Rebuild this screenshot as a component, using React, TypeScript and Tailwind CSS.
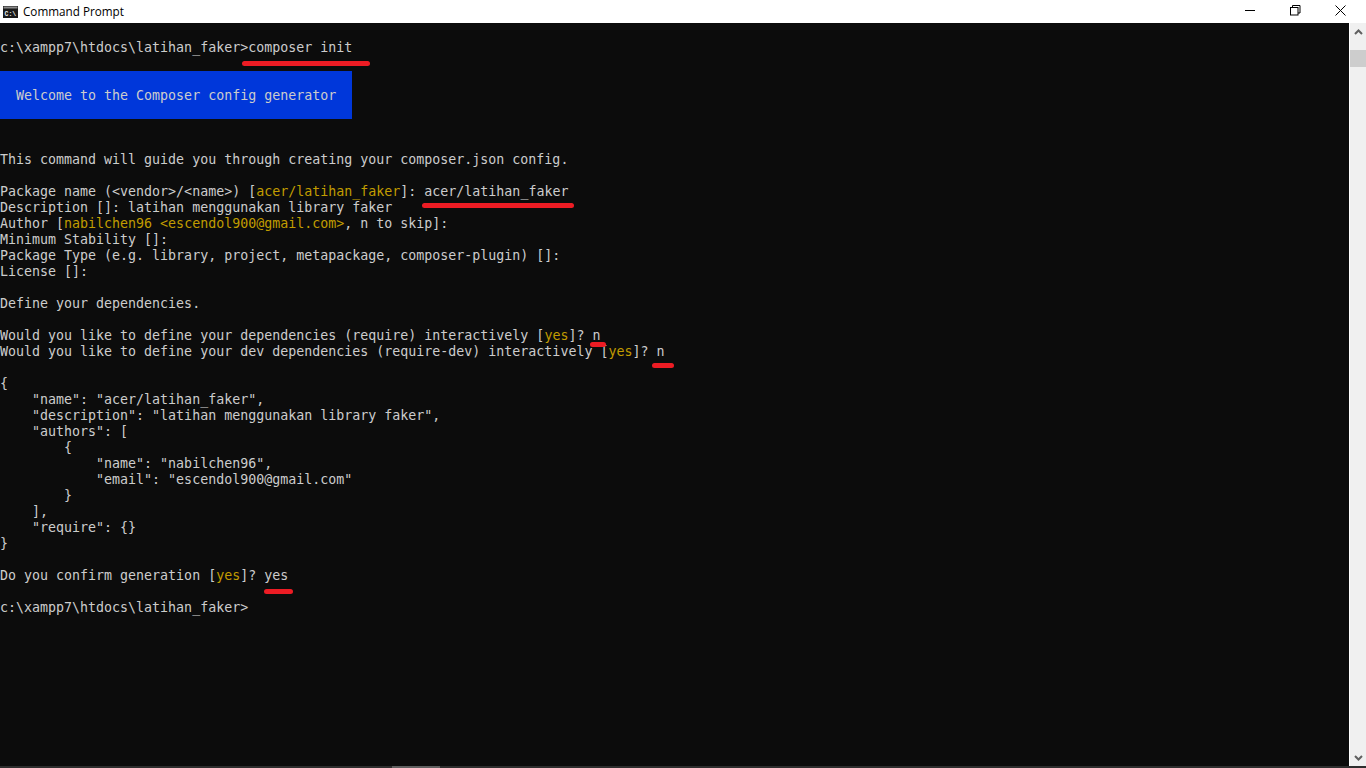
const Y = ({ children }: { children: string }) => <span className="text-[#c19c00]">{children}</span>;

const rows = [
  <>&nbsp;</>,
  <>c:\xampp7\htdocs\latihan_faker&gt;composer init</>,
  <>&nbsp;</>,
  <div className="h-full w-[352px] bg-[#0037da]">&nbsp;</div>,
  <div className="h-full w-[352px] bg-[#0037da]">  Welcome to the Composer config generator</div>,
  <div className="h-full w-[352px] bg-[#0037da]">&nbsp;</div>,
  <>&nbsp;</>,
  <>&nbsp;</>,
  <>This command will guide you through creating your composer.json config.</>,
  <>&nbsp;</>,
  <>Package name (&lt;vendor&gt;/&lt;name&gt;) [<Y>acer/latihan_faker</Y>]: acer/latihan_faker</>,
  <>Description []: latihan menggunakan library faker</>,
  <>Author [<Y>nabilchen96 &lt;escendol900@gmail.com&gt;</Y>, n to skip]:</>,
  <>Minimum Stability []:</>,
  <>Package Type (e.g. library, project, metapackage, composer-plugin) []:</>,
  <>License []:</>,
  <>&nbsp;</>,
  <>Define your dependencies.</>,
  <>&nbsp;</>,
  <>Would you like to define your dependencies (require) interactively [<Y>yes</Y>]? n</>,
  <>Would you like to define your dev dependencies (require-dev) interactively [<Y>yes</Y>]? n</>,
  <>&nbsp;</>,
  <>{'{'}</>,
  <>    "name": "acer/latihan_faker",</>,
  <>    "description": "latihan menggunakan library faker",</>,
  <>    "authors": [</>,
  <>        {'{'}</>,
  <>            "name": "nabilchen96",</>,
  <>            "email": "escendol900@gmail.com"</>,
  <>        {'}'}</>,
  <>    ],</>,
  <>    "require": {'{}'}</>,
  <>{'}'}</>,
  <>&nbsp;</>,
  <>Do you confirm generation [<Y>yes</Y>]? yes</>,
  <>&nbsp;</>,
  <>c:\xampp7\htdocs\latihan_faker&gt;</>,
];

function TitleBar() {
  return (
    <div className="flex h-[23px] shrink-0 items-center bg-white text-black">
      <svg width="15" height="12" viewBox="0 0 15 12" className="ml-[3px]">
        <rect width="15" height="12" fill="#1a1a1a" />
        <rect x="0.5" y="0.5" width="14" height="2" fill="#8a8a8a" />
        <text x="1.5" y="9.5" fontSize="6.5" fontWeight="700" fill="#e8e8e8" fontFamily="'Liberation Mono', monospace">C:\</text>
      </svg>
      <span className="ml-[5px] font-['Open_Sans',sans-serif] text-[11.7px] leading-none">Command Prompt</span>
      <div className="mr-[20px] mb-[2px] ml-auto flex items-center gap-[34px]">
        <svg width="11" height="11" viewBox="0 0 11 11">
          <path d="M0 5.5h10" stroke="#000" strokeWidth="1" />
        </svg>
        <svg width="11" height="11" viewBox="0 0 11 11">
          <path d="M2.5 2.5V.5h7.5v7.5h-2" fill="none" stroke="#000" />
          <rect x="0.5" y="2.5" width="7.5" height="7.5" fill="none" stroke="#000" />
        </svg>
        <svg width="11" height="11" viewBox="0 0 11 11">
          <path d="M.5.5l10 10M10.5.5l-10 10" stroke="#000" strokeWidth="1" />
        </svg>
      </div>
    </div>
  );
}

function Scrollbar() {
  return (
    <div className="flex w-[17px] shrink-0 flex-col border-l border-white bg-[#f0f0f0]">
      <div className="flex h-[17px] items-center justify-center">
        <svg width="9" height="6" viewBox="0 0 9 6">
          <path d="M1 5l3.5-3.5L8 5" fill="none" stroke="#606060" strokeWidth="2" />
        </svg>
      </div>
      <div className="mt-[10px] h-[17px] bg-[#cdcdcd]" />
      <div className="mt-auto flex h-[17px] items-center justify-center">
        <svg width="9" height="6" viewBox="0 0 9 6">
          <path d="M1 1l3.5 3.5L8 1" fill="none" stroke="#606060" strokeWidth="2" />
        </svg>
      </div>
    </div>
  );
}

function Mark({ className }: { className: string }) {
  return <div className={`absolute h-[5px] rounded-full bg-[#ed1c24] ${className}`} />;
}

export default function App() {
  return (
    <div className="flex h-[768px] w-[1366px] flex-col overflow-hidden bg-[#0c0c0c]">
      <TitleBar />
      <div className="relative flex min-h-0 flex-1">
        <div className="flex-1 overflow-hidden whitespace-pre font-['DejaVu_Sans_Mono',monospace] text-[13.3px] leading-[18px] text-[#cccccc]">
          {rows.map((row, i) => (
            <div key={i} className="h-[16px]">{row}</div>
          ))}
        </div>
        <Scrollbar />
        <Mark className="top-[38px] left-[242px] w-[128px]" />
        <Mark className="top-[180px] left-[422px] w-[152px]" />
        <Mark className="top-[319px] left-[590px] w-[16px]" />
        <Mark className="top-[340px] left-[652px] w-[22px]" />
        <Mark className="top-[566px] left-[264px] w-[29px]" />
      </div>
      <div className="flex h-[2px] shrink-0 bg-[#2e2e2e]">
        <div className="ml-[392px] w-[48px] bg-[#606060]" />
      </div>
    </div>
  );
}
